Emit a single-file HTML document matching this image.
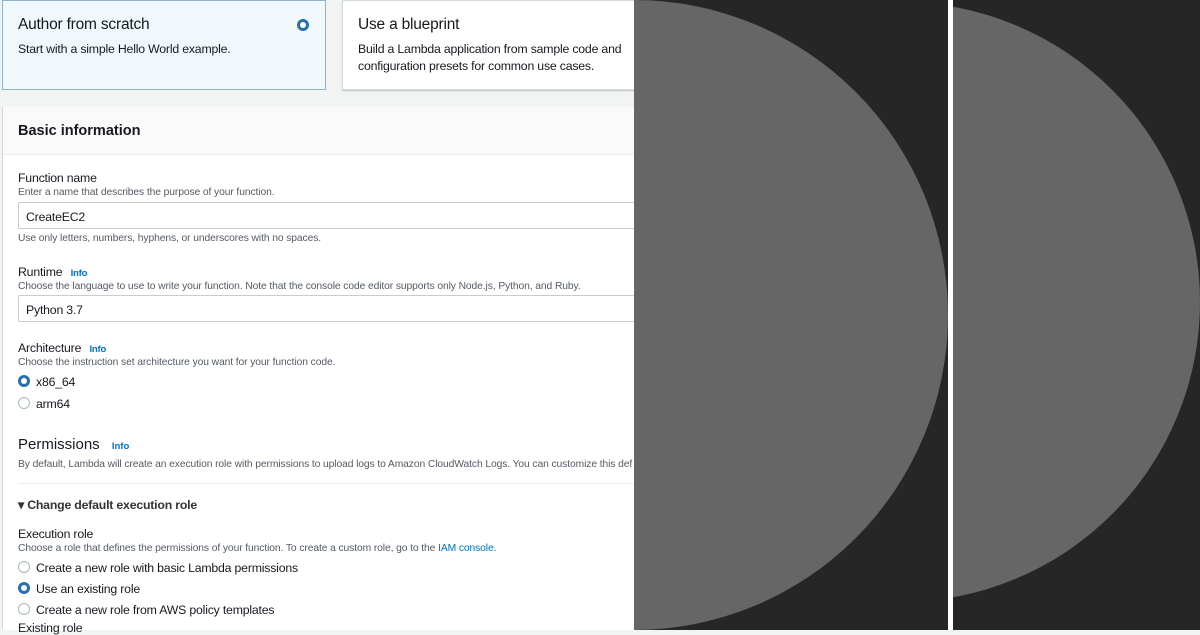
<!DOCTYPE html>
<html><head><meta charset="utf-8"><style>
*{margin:0;padding:0;box-sizing:border-box}
body{width:1200px;height:630px;overflow:hidden;position:relative;background:#f2f3f3;font-family:"Liberation Sans",Arial,sans-serif;color:#16191f}
.a{position:absolute;white-space:nowrap}
.t{font-size:15.5px;letter-spacing:-0.2px}
.l{font-size:12.3px;letter-spacing:-0.2px}
.s{font-size:10.3px;color:#545b64;letter-spacing:-0.1px}
.i{font-size:9.5px;font-weight:bold;color:#0073bb}
.r{position:absolute;width:12px;height:12px;border-radius:50%;border:1px solid #aab7b8;background:#fff}
.r.on{border:3.5px solid #2a6db0}
.inp{position:absolute;left:18px;width:620px;height:27px;border:1px solid #c8ccd0;background:#fff;border-radius:2px}
</style></head><body>
<div class="a" style="left:0;top:0;width:634px;height:630px;background:#f2f3f3"></div>
<div class="a" style="left:2px;top:0;width:324px;height:90px;background:#f1f8fc;border:1px solid #8fb4cc"></div>
<div class="a t" style="left:18px;top:16px">Author from scratch</div>
<div class="a l" style="left:18px;top:42px">Start with a simple Hello World example.</div>
<div class="r on" style="left:297px;top:19px"></div>
<div class="a" style="left:342px;top:0;width:292px;height:90px;background:#fff;border:1px solid #d5dbdb;border-right:none;box-shadow:0 1px 1px rgba(0,0,0,.2)"></div>
<div class="a t" style="left:358px;top:16px">Use a blueprint</div>
<div class="a l" style="left:358px;top:41px;line-height:17px">Build a Lambda application from sample code and<br>configuration presets for common use cases.</div>
<div class="a" style="left:2px;top:107px;width:632px;height:523px;background:#fff;border-left:1px solid #d5dbdb"></div>
<div class="a" style="left:3px;top:107px;width:631px;height:48px;background:#fafafa;border-bottom:1px solid #eaeded"></div>
<div class="a" style="left:18px;top:123px;font-size:14.5px;font-weight:bold">Basic information</div>
<div class="a l" style="left:18px;top:171px">Function name</div>
<div class="a s" style="left:18px;top:187px">Enter a name that describes the purpose of your function.</div>
<div class="inp" style="top:202px"></div>
<div class="a l" style="left:26px;top:210px">CreateEC2</div>
<div class="a s" style="left:18px;top:233px">Use only letters, numbers, hyphens, or underscores with no spaces.</div>
<div class="a l" style="left:18px;top:265px">Runtime <span class="i" style="margin-left:5px">Info</span></div>
<div class="a s" style="left:18px;top:281px">Choose the language to use to write your function. Note that the console code editor supports only Node.js, Python, and Ruby.</div>
<div class="inp" style="top:295px"></div>
<div class="a l" style="left:26px;top:303px">Python 3.7</div>
<div class="a l" style="left:18px;top:341px">Architecture <span class="i" style="margin-left:5px">Info</span></div>
<div class="a s" style="left:18px;top:357px">Choose the instruction set architecture you want for your function code.</div>
<div class="r on" style="left:18px;top:375px"></div><div class="a l" style="left:36px;top:375px">x86_64</div>
<div class="r" style="left:18px;top:397px"></div><div class="a l" style="left:36px;top:397px">arm64</div>
<div class="a" style="left:18px;top:436px;font-size:15px">Permissions <span class="i" style="margin-left:8px">Info</span></div>
<div class="a s" style="left:18px;top:459px">By default, Lambda will create an execution role with permissions to upload logs to Amazon CloudWatch Logs. You can customize this def</div>
<div class="a" style="left:18px;top:483px;width:616px;height:1px;background:#eaeded"></div>
<div class="a l" style="left:18px;top:498px;font-weight:bold;color:#333">▾ Change default execution role</div>
<div class="a l" style="left:18px;top:527px">Execution role</div>
<div class="a s" style="left:18px;top:543px">Choose a role that defines the permissions of your function. To create a custom role, go to the <span style="color:#0073bb">IAM console</span>.</div>
<div class="r" style="left:18px;top:561px"></div><div class="a l" style="left:36px;top:561px">Create a new role with basic Lambda permissions</div>
<div class="r on" style="left:18px;top:582px"></div><div class="a l" style="left:36px;top:582px">Use an existing role</div>
<div class="r" style="left:18px;top:603px"></div><div class="a l" style="left:36px;top:603px">Create a new role from AWS policy templates</div>
<div class="a l" style="left:18px;top:621px">Existing role</div>
<svg class="a" style="left:634px;top:0" width="566" height="630">
<rect x="0" y="0" width="314" height="630" fill="#262626"/>
<ellipse cx="0" cy="315" rx="314" ry="315" fill="#666"/>
<rect x="314" y="0" width="5" height="630" fill="#fff"/>
<svg x="319" y="0" width="247" height="630"><rect width="247" height="630" fill="#262626"/><circle cx="-53" cy="302" r="300" fill="#666"/></svg>
</svg>
</body></html>
